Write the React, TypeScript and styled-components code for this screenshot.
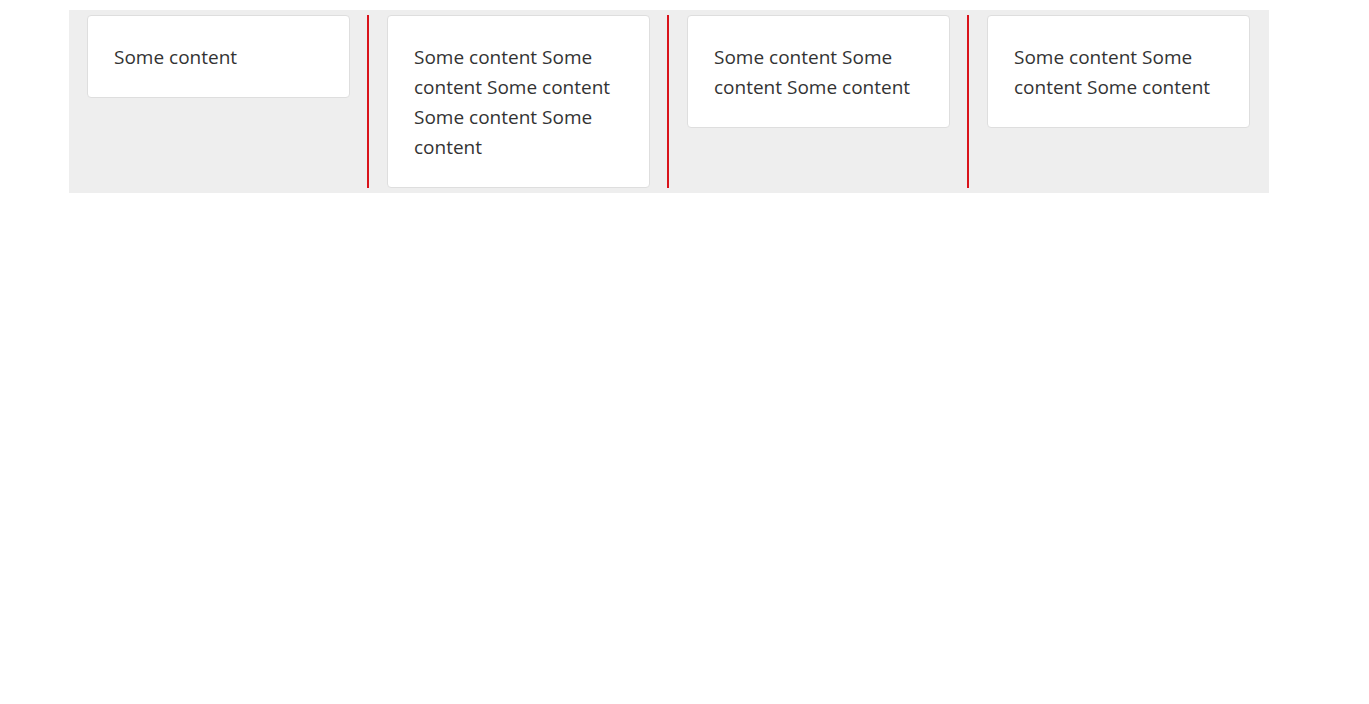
import React from 'react'
import styled, { createGlobalStyle } from 'styled-components'

const GlobalStyle = createGlobalStyle`
  body {
    margin: 0;
    background: #fff;
    font-family: 'Open Sans', 'Noto Sans', sans-serif;
  }
`

const columns = [
  'Some content',
  'Some content Some content Some content Some content Some content',
  'Some content Some content Some content',
  'Some content Some content Some content',
]

const App: React.FC = () => (
  <>
    <GlobalStyle />
    <Page>
      <Row>
        {columns.map((text, i) => (
          <Column key={i} last={i === columns.length - 1}>
            <Card>{text}</Card>
          </Column>
        ))}
      </Row>
    </Page>
  </>
)

const Page = styled.div`
  width: 1200px;
  margin: 10px 0 0 69px;
`

const Row = styled.div`
  display: flex;
  align-items: stretch;
  padding: 5px 0;
  background-color: #eee;
`

const Column = styled.div<{ last: boolean }>`
  flex: 0 0 300px;
  box-sizing: border-box;
  padding: 0 17px 0 18px;
  border-right: 2px solid ${(p) => (p.last ? 'transparent' : '#d9131a')};
  display: flex;
  align-items: flex-start;
`

const Card = styled.div`
  flex: 1;
  box-sizing: border-box;
  padding: 26px 25px 25px 26px;
  background: #fff;
  border: 1px solid #dedede;
  border-radius: 4px;
  color: #333;
  font-size: 19px;
  line-height: 30px;
`

export default App
